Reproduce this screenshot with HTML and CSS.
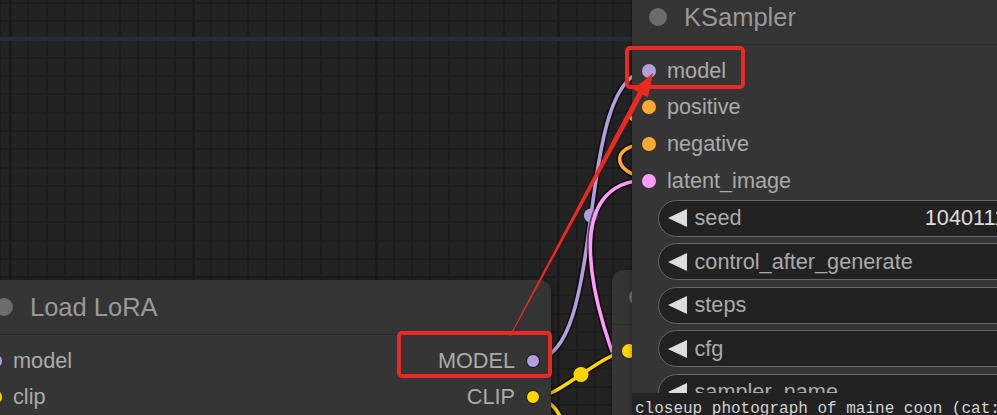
FILE: index.html
```html
<!DOCTYPE html>
<html lang="en">
<head>
    <meta charset="UTF-8">
    <meta name="viewport" content="width=device-width, initial-scale=1.0">
    <title>ComfyUI - Load LoRA to KSampler</title>
    <link rel="stylesheet" href="styles.css">
</head>
<body>
    <div class="graph">
        <!-- links are drawn under the nodes -->
        <svg class="links" width="997" height="415" viewBox="0 0 997 415">
            <line class="group-edge" x1="0" y1="39" x2="640" y2="39"/>
            <g class="link">
                <path class="link-shadow" d="M533,360 C610,360 572,71 649,71"/>
                <path class="link-line model-line" d="M533,360 C610,360 572,71 649,71"/>
                <circle class="model-fill" cx="591" cy="215.5" r="7"/>
            </g>
            <g class="link">
                <path class="link-shadow" d="M649,107 C622,107 620,124 660,126"/>
                <path class="link-line cond-line" d="M649,107 C622,107 620,124 660,126"/>
            </g>
            <g class="link">
                <path class="link-shadow" d="M649,144 C605,144 612,180 660,178"/>
                <path class="link-line cond-line" d="M649,144 C605,144 612,180 660,178"/>
            </g>
            <g class="link">
                <path class="link-shadow" d="M649,180 C560,180 585,300 640,420"/>
                <path class="link-line latent-line" d="M649,180 C560,180 585,300 640,420"/>
            </g>
            <g class="link">
                <path class="link-shadow" d="M533,398 C575,398 560,470 610,480"/>
                <path class="link-line clip-line" d="M533,398 C575,398 560,470 610,480"/>
            </g>
            <g class="link">
                <path class="link-shadow" d="M533,398 C560,398 602,351 630,351"/>
                <path class="link-line clip-line" d="M533,398 C560,398 602,351 630,351"/>
                <circle class="clip-fill" cx="581" cy="374.5" r="7.5"/>
            </g>
        </svg>

        <div class="node lora">
            <div class="node-title"><span class="title-dot"></span>Load LoRA</div>
            <div class="node-body">
                <div class="slot-row">
                    <div class="slot"><i class="dot model"></i>model</div>
                    <div class="slot">MODEL<i class="dot ring model"></i></div>
                </div>
                <div class="slot-row">
                    <div class="slot"><i class="dot clip"></i>clip</div>
                    <div class="slot">CLIP<i class="dot ring clip"></i></div>
                </div>
            </div>
        </div>

        <div class="node clip-node">
            <div class="node-title"><span class="title-dot"></span></div>
            <div class="node-body">
                <div class="slot-row">
                    <div class="slot"><i class="dot clip"></i></div>
                </div>
            </div>
        </div>

        <div class="node ksampler">
            <div class="node-title"><span class="title-dot"></span>KSampler</div>
            <div class="node-body">
                <div class="slot-row"><div class="slot"><i class="dot model"></i>model</div></div>
                <div class="slot-row"><div class="slot"><i class="dot cond"></i>positive</div></div>
                <div class="slot-row"><div class="slot"><i class="dot cond"></i>negative</div></div>
                <div class="slot-row"><div class="slot"><i class="dot latent"></i>latent_image</div></div>
                <div class="widgets">
                    <div class="widget">
                        <svg class="arrow" width="19" height="18" viewBox="0 0 19 18"><polygon points="19,0 19,18 0,9"/></svg>
                        <span>seed</span>
                        <span class="widget-value">1040111</span>
                    </div>
                    <div class="widget">
                        <svg class="arrow" width="19" height="18" viewBox="0 0 19 18"><polygon points="19,0 19,18 0,9"/></svg>
                        <span>control_after_generate</span>
                    </div>
                    <div class="widget">
                        <svg class="arrow" width="19" height="18" viewBox="0 0 19 18"><polygon points="19,0 19,18 0,9"/></svg>
                        <span>steps</span>
                    </div>
                    <div class="widget">
                        <svg class="arrow" width="19" height="18" viewBox="0 0 19 18"><polygon points="19,0 19,18 0,9"/></svg>
                        <span>cfg</span>
                    </div>
                    <div class="widget">
                        <svg class="arrow" width="19" height="18" viewBox="0 0 19 18"><polygon points="19,0 19,18 0,9"/></svg>
                        <span>sampler_name</span>
                    </div>
                </div>
            </div>
        </div>

        <div class="prompt-text">closeup photograph of maine coon (cat:1.2) in the snow</div>

        <!-- red annotation on top -->
        <svg class="marks" width="997" height="415" viewBox="0 0 997 415">
            <rect x="627" y="48" width="116" height="39" rx="3"/>
            <rect x="399" y="333" width="151" height="43" rx="3"/>
            <polygon class="arrow-shape" points="510.4,336.2 642.8,94.7 648,97.6 653,73 633.2,89.4 638,92 509.6,335.8"/>
        </svg>
    </div>
</body>
</html>
```

FILE: styles.css
```css
* {
    margin: 0;
    padding: 0;
    box-sizing: border-box;
}

body {
    width: 997px;
    height: 415px;
    overflow: hidden;
    background: #222;
    font-family: 'Liberation Sans', Arial, sans-serif;
}

.graph {
    position: relative;
    width: 997px;
    height: 415px;
    overflow: hidden;
    background-color: #232323;
    background-image:
        repeating-linear-gradient(90deg, #1a1a1a 0 3px, transparent 3px 182.8px),
        repeating-linear-gradient(90deg, #1d1d1d 0 2px, transparent 2px 18.28px),
        repeating-linear-gradient(180deg, #1d1d1d 0 2px, transparent 2px 18.28px);
    background-position: 9px 0, 9px 0, 0 2px;
}

.links,
.marks {
    position: absolute;
    left: 0;
    top: 0;
}

.marks {
    z-index: 5;
}

.group-edge {
    stroke: #252d3c;
    stroke-width: 4;
}

.link-shadow {
    fill: none;
    stroke: rgba(0, 0, 0, 0.55);
    stroke-width: 7;
    stroke-linecap: round;
}

.link-line {
    fill: none;
    stroke-width: 3.6;
    stroke-linecap: round;
}

.model-line { stroke: #b39ddb; }
.cond-line { stroke: #ffa931; }
.latent-line { stroke: #ff9cf9; }
.clip-line { stroke: #ffd500; }
.model-fill { fill: #b39ddb; }
.clip-fill { fill: #ffd500; }

.marks rect {
    fill: none;
    stroke: #ea2a22;
    stroke-width: 4;
}

.marks .arrow-shape {
    fill: #ea2a22;
}

/* nodes */
.node {
    position: absolute;
    background: #353535;
    border-radius: 12px;
    box-shadow: 1px 1px 6px rgba(0, 0, 0, 0.45);
}

.node-title {
    height: 55px;
    display: flex;
    align-items: center;
    gap: 17px;
    padding-left: 17px;
    background: #343434;
    border-radius: 12px 12px 0 0;
    border-bottom: 1px solid #2b2b2b;
    color: #999;
    font-size: 25.5px;
    white-space: nowrap;
}

.title-dot {
    width: 18px;
    height: 18px;
    border-radius: 50%;
    background: #6c6c6c;
    flex: none;
}

.node-body {
    padding-top: 7.5px;
}

.slot-row {
    height: 36.6px;
    display: flex;
    align-items: center;
    justify-content: space-between;
    padding: 0 11px 0 10px;
    color: #aaa;
    font-size: 21.7px;
}

.slot {
    display: flex;
    align-items: center;
    gap: 11px;
}

.dot {
    width: 14px;
    height: 14px;
    border-radius: 50%;
    flex: none;
}

.dot.ring {
    border: 1.5px solid #111;
}

.dot.model { background: #b39ddb; }
.dot.clip { background: #ffd500; }
.dot.cond { background: #ffa931; }
.dot.latent { background: #ff9cf9; }

.lora {
    left: -22px;
    top: 280px;
    width: 573px;
    height: 200px;
}

.clip-node {
    left: 612px;
    top: 270px;
    width: 320px;
    height: 200px;
}

.ksampler {
    left: 632px;
    top: -10px;
    width: 420px;
    height: 460px;
    border-radius: 12px 12px 0 0;
}

/* widgets */
.widgets {
    display: flex;
    flex-direction: column;
    gap: 6.5px;
    margin-top: 1px;
    padding: 0 26px;
}

.widget {
    height: 37px;
    display: flex;
    align-items: center;
    padding-left: 8.5px;
    border: 1.5px solid #666;
    border-radius: 18.5px;
    background: #222;
    color: #aaa;
    font-size: 21.7px;
    white-space: nowrap;
}

.arrow {
    flex: none;
    margin-right: 8px;
    fill: #ddd;
}

.widget-value {
    margin-left: auto;
    padding-right: 19px;
    color: #ddd;
}

.prompt-text {
    position: absolute;
    left: 632px;
    top: 393px;
    width: 365px;
    height: 30px;
    padding: 7.5px 0 0 3px;
    background: #222;
    color: #d4d4d4;
    font-family: 'Liberation Mono', monospace;
    font-size: 16px;
    line-height: 16px;
    white-space: nowrap;
    overflow: hidden;
    z-index: 4;
}
```
